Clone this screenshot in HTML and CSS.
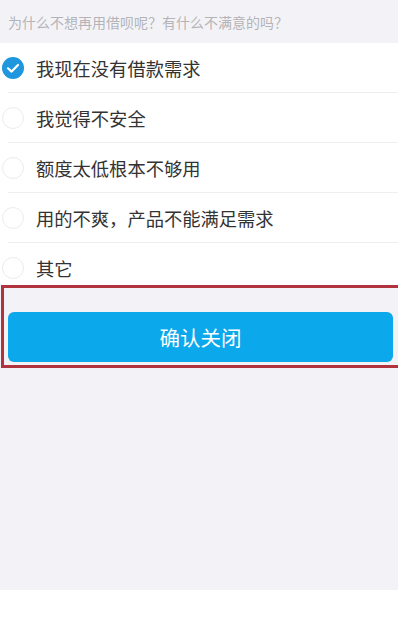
FILE: index.html
```html
<!DOCTYPE html>
<html lang="zh-CN">
<head>
<meta charset="utf-8">
<link rel="stylesheet" href="styles.css">
</head>
<body>
<div class="page">
  <div class="header">为什么不想再用借呗呢？有什么不满意的吗？</div>
  <ul class="list">
    <li class="row checked">
      <span class="radio"><svg viewBox="0 0 22 22" width="22" height="22"><circle cx="11" cy="11" r="11" fill="#1f97de"/><path d="M6 11.3 L9.6 14.6 L16 8" fill="none" stroke="#fff" stroke-width="2.2" stroke-linecap="round" stroke-linejoin="round"/></svg></span>
      <span class="label">我现在没有借款需求</span>
    </li>
    <li class="row"><span class="radio empty"></span><span class="label">我觉得不安全</span></li>
    <li class="row"><span class="radio empty"></span><span class="label">额度太低根本不够用</span></li>
    <li class="row"><span class="radio empty"></span><span class="label">用的不爽，产品不能满足需求</span></li>
    <li class="row last"><span class="radio empty"></span><span class="label">其它</span></li>
  </ul>
  <div class="highlight">
    <button class="confirm">确认关闭</button>
  </div>
</div>
</body>
</html>
```

FILE: styles.css
```css
html, body {
  margin: 0;
  padding: 0;
  background: #ffffff;
  overflow: hidden;
}
body {
  width: 398px;
  height: 628px;
  font-family: "Noto Sans CJK SC", "Noto Sans", sans-serif;
}
.page {
  height: 590px;
  background: #f3f3f7;
}
.header {
  height: 43px;
  box-sizing: border-box;
  padding: 13px 0 0 8px;
  font-size: 14px;
  line-height: 18px;
  color: #b4b4b8;
}
.list {
  list-style: none;
  margin: 0;
  padding: 0;
  background: #ffffff;
}
.row {
  position: relative;
  height: 50px;
  display: flex;
  align-items: center;
}
.row::after {
  content: "";
  position: absolute;
  left: 8px;
  right: 0;
  bottom: 0;
  height: 1px;
  background: #eeeef0;
}
.row.last {
  height: 42px;
  align-items: flex-start;
  padding-top: 14px;
  box-sizing: border-box;
}
.row.last::after {
  display: none;
}
.radio {
  width: 22px;
  height: 22px;
  margin-left: 2px;
  flex: none;
  display: block;
}
.radio svg {
  display: block;
}
.radio.empty {
  box-sizing: border-box;
  border: 1px solid #ececee;
  border-radius: 50%;
}
.label {
  margin-left: 12px;
  font-size: 18.3px;
  line-height: 22px;
  color: #333333;
}
.highlight {
  margin-left: 1px;
  border: 3px solid #b0343d;
  border-right: 0;
  padding: 24px 5px 3px 4px;
}
.confirm {
  display: block;
  width: 100%;
  height: 50px;
  border: 0;
  border-radius: 6px;
  background: #0ba8ec;
  color: #ffffff;
  font-family: "Noto Sans CJK SC", "Noto Sans", sans-serif;
  font-size: 20.5px;
  padding: 0;
}
```
